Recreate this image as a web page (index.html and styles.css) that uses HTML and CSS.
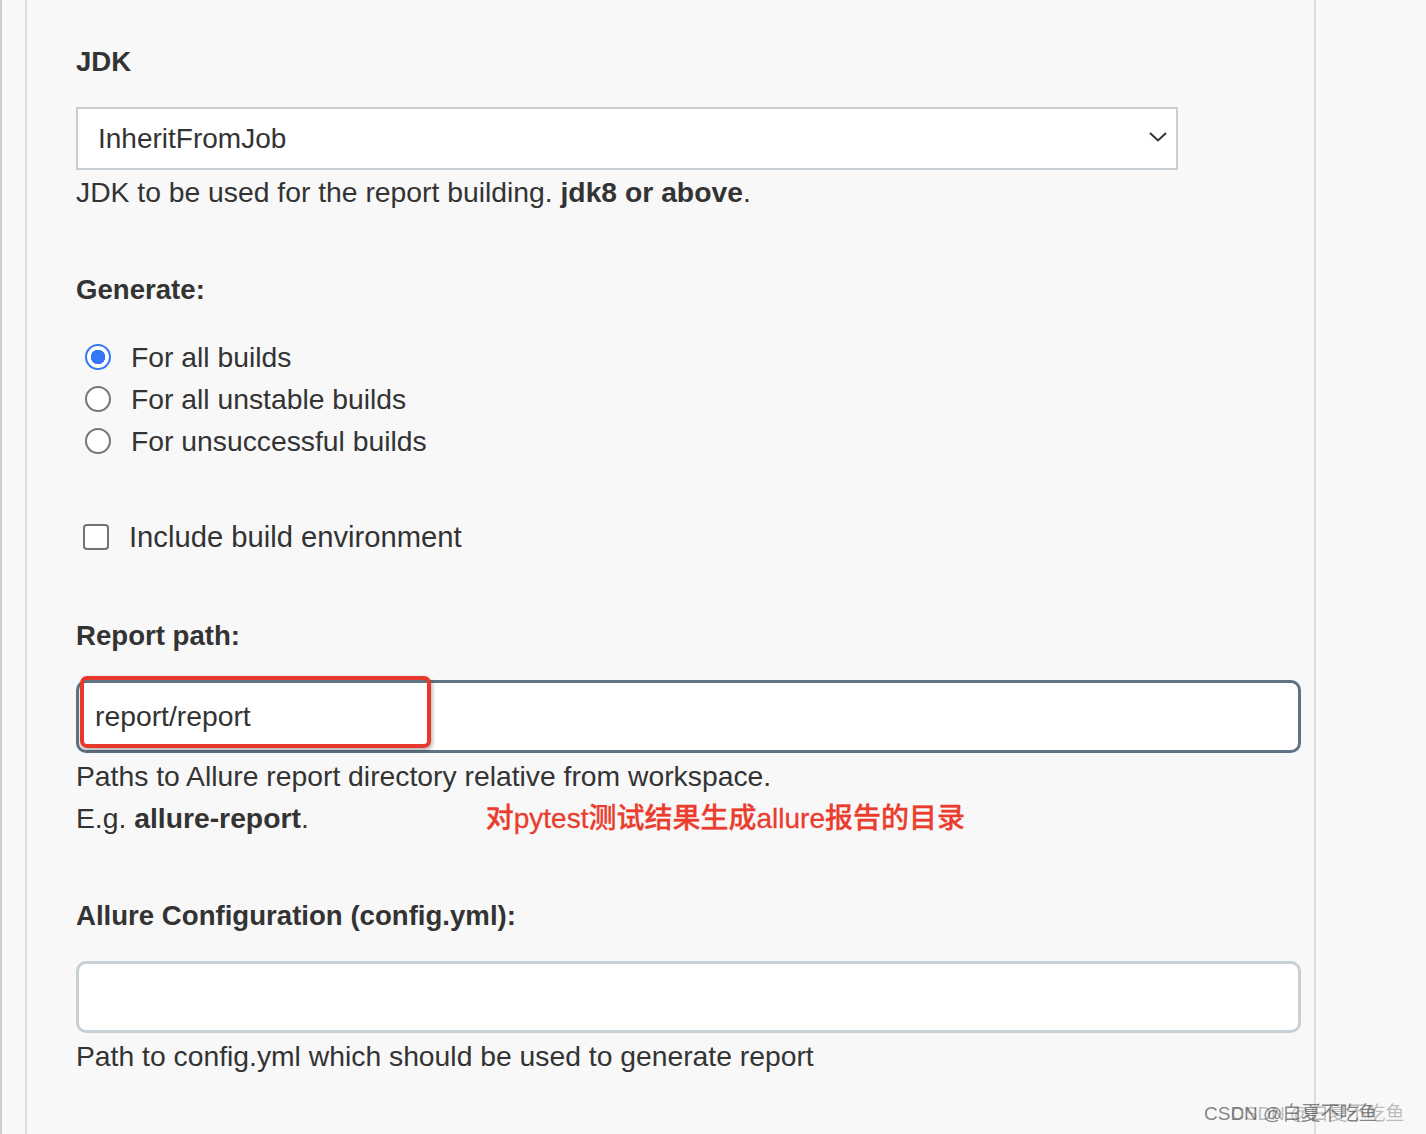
FILE: index.html
```html
<!DOCTYPE html>
<html>
<head>
<meta charset="utf-8">
<link rel="stylesheet" href="styles.css">
</head>
<body>
<div class="page">
  <div class="panel">
    <div class="content">
      <div class="heading h-jdk">JDK</div>
      <div class="select">
        <span class="select-value">InheritFromJob</span>
        <svg class="chevron" width="20" height="12" viewBox="0 0 20 12"><path d="M2 2 L10 9.5 L18 2" fill="none" stroke="#333" stroke-width="2"/></svg>
      </div>
      <div class="desc">JDK to be used for the report building. <b>jdk8 or above</b>.</div>

      <div class="heading h-gen">Generate:</div>
      <div class="radios">
        <div class="radio-row"><span class="radio checked"></span><span class="label">For all builds</span></div>
        <div class="radio-row"><span class="radio"></span><span class="label">For all unstable builds</span></div>
        <div class="radio-row"><span class="radio"></span><span class="label">For unsuccessful builds</span></div>
      </div>

      <div class="check-row"><span class="checkbox"></span><span class="label check-label">Include build environment</span></div>

      <div class="heading h-path">Report path:</div>
      <div class="input-wrap">
        <div class="input dark">report/report</div>
        <div class="redbox"></div>
      </div>
      <div class="desc">Paths to Allure report directory relative from workspace.</div>
      <div class="desc">E.g. <b>allure-report</b>.<span class="note">对pytest测试结果生成allure报告的目录</span></div>

      <div class="heading h-conf">Allure Configuration (config.yml):</div>
      <div class="input light"></div>
      <div class="desc">Path to config.yml which should be used to generate report</div>
    </div>
  </div>
</div>
<div class="watermark">CSDN @白夏不吃鱼</div>
</body>
</html>
```

FILE: styles.css
```css
html, body {
  margin: 0;
  padding: 0;
  background: #f8f8f8;
}
body {
  font-family: "Liberation Sans", Arial, "Noto Sans CJK SC", sans-serif;
  color: #333;
  font-size: 28.3px;
  width: 1426px;
  height: 1134px;
  overflow: hidden;
  position: relative;
}
.page {
  border-left: 2px solid #c8d0d6;
  height: 1134px;
  box-sizing: border-box;
  padding-left: 23px;
}
.panel {
  border-left: 2px solid #dedede;
  border-right: 2px solid #dedede;
  width: 1291px;
  height: 1134px;
  box-sizing: border-box;
  background: #f8f8f8;
}
.content {
  padding-left: 49px;
  padding-top: 44px;
  width: 1224px;
}
.heading {
  font-weight: bold;
  font-size: 27.6px;
  line-height: 36px;
  height: 36px;
}
.h-gen { margin-top: 59px; }
.h-path { margin-top: 60px; }
.h-conf { margin-top: 59px; }
.select {
  margin-top: 27px;
  width: 1102px;
  height: 63px;
  box-sizing: border-box;
  border: 2px solid #c7ced3;
  background: #fff;
  display: flex;
  align-items: center;
  justify-content: space-between;
  padding: 0 8px 0 20px;
  font-size: 28px;
}
.select-value { line-height: 36px; }
.chevron { margin-top: -4px; }
.desc {
  line-height: 42px;
  height: 42px;
  white-space: nowrap;
}
.select + .desc { margin-top: 1px; }
.radios {
  margin-top: 28px;
}
.radio-row, .check-row {
  display: flex;
  align-items: center;
  height: 42px;
}
.radio {
  width: 26px;
  height: 26px;
  box-sizing: border-box;
  border-radius: 50%;
  border: 2px solid #767676;
  background: #fff;
  margin-left: 9px;
  margin-right: 20px;
}
.radio.checked {
  border: 2.5px solid #3478f6;
  background: radial-gradient(circle, #3478f6 0 7px, #fff 7.5px);
}
.check-row {
  margin-top: 54px;
}
.check-label {
  font-size: 29.2px;
}
.checkbox {
  width: 26px;
  height: 26px;
  box-sizing: border-box;
  border: 2px solid #727272;
  border-radius: 4px;
  background: #fff;
  margin-left: 7px;
  margin-right: 20px;
}
.input-wrap {
  position: relative;
  margin-top: 26px;
  width: 1225px;
}
.input {
  height: 73px;
  box-sizing: border-box;
  border-radius: 10px;
  background: #fff;
  display: flex;
  align-items: center;
  padding-left: 16px;
  width: 1225px;
}
.input.dark {
  border: 3.5px solid #5f7384;
}
.input.light {
  margin-top: 27px;
  height: 72px;
  border: 3.5px solid #c7d0d4;
}
.redbox {
  position: absolute;
  left: 4px;
  top: -4px;
  width: 351px;
  height: 72px;
  box-sizing: border-box;
  border: 4px solid #e8382c;
  border-radius: 7px;
  box-shadow: 1px 2px 4px rgba(0,0,0,0.35);
}
.input-wrap + .desc { margin-top: 2px; }
.input.light + .desc { margin-top: 2px; }
.note {
  color: #eb3d2e;
  margin-left: 177px;
  font-size: 28px;
  font-family: "Liberation Sans", "Noto Sans CJK SC", sans-serif;
  font-weight: 500;
  -webkit-text-stroke: 0.3px #eb3d2e;
}
.watermark {
  position: absolute;
  left: 1204px;
  top: 1102px;
  font-size: 19px;
  line-height: 24px;
  white-space: nowrap;
  color: rgba(80,80,80,0.7);
  text-shadow: 27px 0 rgba(110,110,110,0.45);
  font-family: "Liberation Sans", "Noto Sans CJK SC", sans-serif;
}
```
